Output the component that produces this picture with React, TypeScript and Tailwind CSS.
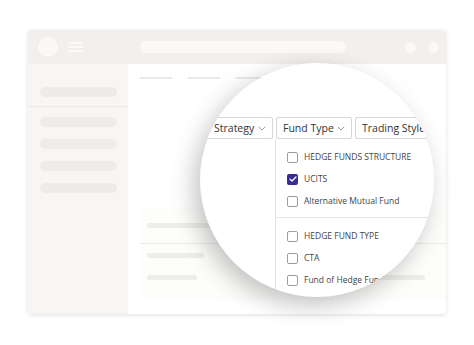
import React from "react";

const font = { fontFamily: '"Open Sans", "Liberation Sans", sans-serif' };

function Chevron() {
  return (
    <svg width="8" height="5" viewBox="0 0 8 5" className="shrink-0">
      <path d="M1 1 L4 4 L7 1" fill="none" stroke="#9a9a9a" strokeWidth="1" strokeLinecap="round" strokeLinejoin="round" />
    </svg>
  );
}

function Checkbox({ checked }: { checked?: boolean }) {
  if (checked) {
    return (
      <span className="flex h-[11px] w-[11px] shrink-0 items-center justify-center rounded-[2px] bg-[#3a2c98]">
        <svg width="8" height="6" viewBox="0 0 8 6">
          <path d="M1 3.1 L3 5 L7 1" fill="none" stroke="#fff" strokeWidth="1.3" strokeLinecap="round" strokeLinejoin="round" />
        </svg>
      </span>
    );
  }
  return <span className="h-[11px] w-[11px] shrink-0 rounded-[2px] border border-[#9d9d9d] bg-white" />;
}

function FilterButton({ label, className }: { label: string; className: string }) {
  return (
    <div className={`flex h-[22px] shrink-0 items-center justify-between rounded-[2px] border border-[#d6d6d6] bg-white px-[6px] ${className}`}>
      <span className="text-[10.5px] leading-none text-[#333]">{label}</span>
      <Chevron />
    </div>
  );
}

function Option({ label, checked }: { label: string; checked?: boolean }) {
  return (
    <div className="flex h-[22px] items-center gap-[6px] pl-[11px]">
      <Checkbox checked={checked} />
      <span className="whitespace-nowrap text-[8.5px] leading-none text-[#444]">{label}</span>
    </div>
  );
}

function Magnifier() {
  return (
    <div className="absolute left-[172px] top-[33px] h-[234px] w-[234px] overflow-hidden rounded-full bg-white shadow-[-6px_8px_24px_rgba(0,0,0,0.24)]" style={font}>
      <div className="pt-[54px]">
        <div className="ml-[7px] flex gap-[3px]">
          <FilterButton label="Strategy" className="w-[66px]" />
          <FilterButton label="Fund Type" className="w-[76px]" />
          <FilterButton label="Trading Style" className="w-[90px]" />
        </div>
        <div className="ml-[75px] w-[200px] border-l border-[#e2e2e2]">
          <div className="pb-[5px] pt-[7px]">
            <Option label="HEDGE FUNDS STRUCTURE" />
            <Option label="UCITS" checked />
            <Option label="Alternative Mutual Fund" />
          </div>
          <div className="border-t border-[#e6e6e6] pt-[7px]">
            <Option label="HEDGE FUND TYPE" />
            <Option label="CTA" />
            <Option label="Fund of Hedge Funds" />
          </div>
        </div>
      </div>
    </div>
  );
}

export default function App() {
  return (
    <div className="h-[345px] w-[474px] bg-white pl-[28px] pt-[30px]">
      <div className="relative flex h-[284px] w-[418px] flex-col rounded-[4px] bg-white shadow-[0_1px_4px_rgba(0,0,0,0.13)]">
        {/* top bar */}
        <div className="flex h-[34px] shrink-0 items-center rounded-t-[4px] bg-[#f2efec] pl-[10px] pr-[7px]">
          <div className="h-[20px] w-[20px] rounded-full bg-[#fbf9f7]" />
          <div className="ml-[10px] flex w-[15px] flex-col gap-[2.5px]">
            <div className="h-[1.5px] bg-[#fbf9f7]" />
            <div className="h-[1.5px] bg-[#fbf9f7]" />
            <div className="h-[1.5px] bg-[#fbf9f7]" />
          </div>
          <div className="ml-[57px] h-[12px] w-[206px] rounded-full bg-[#fbf9f7]" />
          <div className="ml-auto flex gap-[12px]">
            <div className="h-[11px] w-[11px] rounded-full bg-[#fbf9f7]" />
            <div className="h-[11px] w-[11px] rounded-full bg-[#fbf9f7]" />
          </div>
        </div>

        <div className="flex flex-1">
          {/* sidebar */}
          <div className="w-[100px] rounded-bl-[4px] bg-[#f7f6f4]">
            <div className="h-[43px] border-b border-[#ebe8e5] pl-[12px] pt-[23px]">
              <div className="h-[10px] w-[77px] rounded-full bg-[#eeebe8]" />
            </div>
            <div className="flex flex-col gap-[12px] pl-[12px] pt-[10px]">
              <div className="h-[10px] w-[77px] rounded-full bg-[#eeebe8]" />
              <div className="h-[10px] w-[77px] rounded-full bg-[#eeebe8]" />
              <div className="h-[10px] w-[77px] rounded-full bg-[#eeebe8]" />
              <div className="h-[10px] w-[77px] rounded-full bg-[#eeebe8]" />
            </div>
          </div>

          {/* main */}
          <div className="flex flex-1 flex-col pl-[12px]">
            <div className="flex gap-[16px] pt-[13px]">
              <div className="h-[2px] w-[32px] bg-[#ebe9e6]" />
              <div className="h-[2px] w-[32px] bg-[#ebe9e6]" />
              <div className="h-[2px] w-[32px] bg-[#ebe9e6]" />
            </div>
            <div className="mt-[128px] h-[93px] bg-[#fdfdfc]">
              <div className="flex h-[37px] items-center border-b border-[#ebe9e6] pl-[7px]">
                <div className="h-[5px] w-[63px] rounded-full bg-[#efedea]" />
              </div>
              <div className="flex h-[21px] items-center pl-[7px] pt-[2px]">
                <div className="h-[5px] w-[57px] rounded-full bg-[#efedea]" />
              </div>
              <div className="flex h-[24px] items-center justify-between pl-[7px] pr-[21px]">
                <div className="h-[5px] w-[50px] rounded-full bg-[#efedea]" />
                <div className="h-[5px] w-[95px] rounded-full bg-[#efedea]" />
              </div>
            </div>
          </div>
        </div>

        <Magnifier />
      </div>
    </div>
  );
}
